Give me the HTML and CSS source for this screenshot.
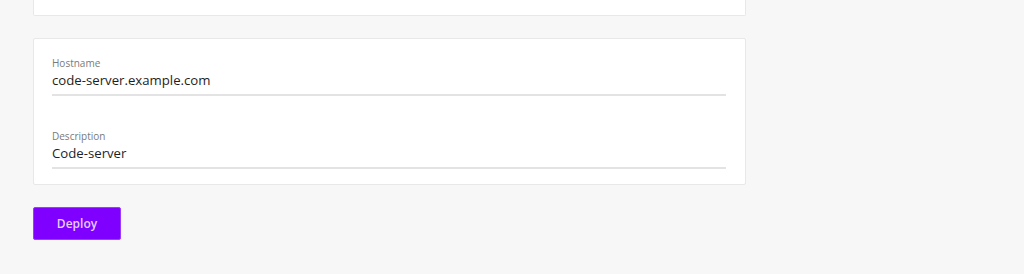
FILE: index.html
```html
<!DOCTYPE html>
<html>
<head>
<meta charset="utf-8">
<link rel="stylesheet" href="styles.css">
</head>
<body>
<main class="page">
  <div class="card card-top"></div>
  <div class="card card-form">
    <div class="field">
      <div class="field-label">Hostname</div>
      <div class="field-value">code-server.example.com</div>
    </div>
    <div class="field">
      <div class="field-label">Description</div>
      <div class="field-value">Code-server</div>
    </div>
  </div>
  <div class="actions">
    <button class="btn-deploy">Deploy</button>
  </div>
</main>
</body>
</html>
```

FILE: styles.css
```css
html, body {
  margin: 0;
  padding: 0;
  background: #f7f7f7;
  font-family: "Open Sans", "Noto Sans", sans-serif;
}
.page {
  width: 713px;
  margin-left: 33px;
  display: flex;
  flex-direction: column;
}
.card {
  background: #fff;
  border: 1px solid #e8e8e8;
  border-radius: 2px;
  box-sizing: border-box;
}
.card-top {
  height: 16px;
  border-top: none;
  border-radius: 0 0 2px 2px;
}
.card-form {
  margin-top: 22px;
  padding: 17px 19px 15px 18px;
  display: flex;
  flex-direction: column;
  gap: 33px;
}
.field {
  border-bottom: 2px solid #e3e3e3;
  padding-bottom: 4px;
}
.field-label {
  font-size: 10px;
  line-height: 14px;
  color: #7a7a7a;
}
.field-value {
  font-size: 13.2px;
  line-height: 20px;
  color: #1e1e1e;
}
.actions {
  margin-top: 22px;
  display: flex;
}
.btn-deploy {
  width: 88px;
  height: 33px;
  background: #8000ff;
  border: 1px solid #9a3cff;
  border-radius: 2px;
  color: #e6ccff;
  font-family: "Open Sans", sans-serif;
  font-weight: 600;
  font-size: 12px;
  padding: 0;
  cursor: pointer;
}
```
